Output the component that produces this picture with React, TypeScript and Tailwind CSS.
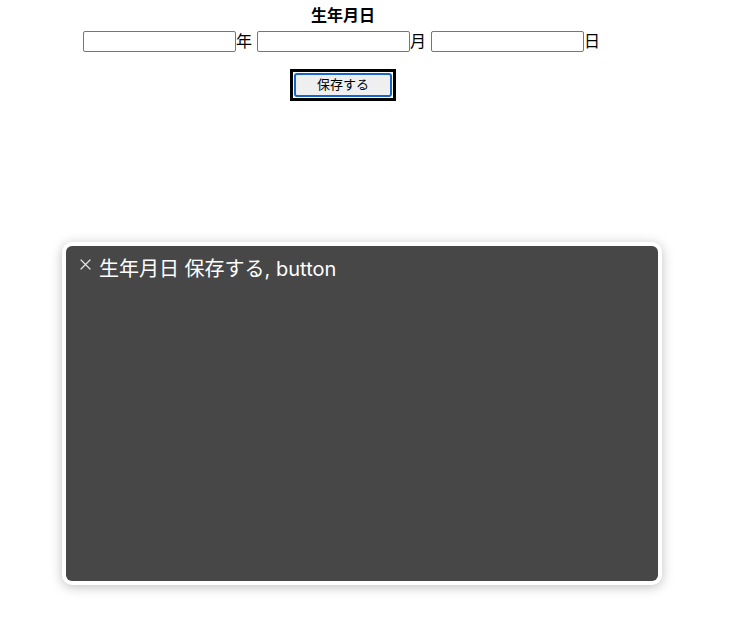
import React from "react";

const jp = "font-['Liberation_Sans','Noto_Sans_CJK_JP',sans-serif]";

export default function App() {
    return (
        <div className={`relative w-[744px] h-[629px] bg-white text-black ${jp}`}>
            <div className="w-[686px] pt-[6px]">
                <div className="text-center text-[16px] leading-[20px] font-bold">生年月日</div>
                <div className="flex items-center pl-[83px] mt-[5px] text-[16px] leading-[21px]">
                    <input className="w-[153px] h-[21px] border border-[#767676] rounded-[2px] bg-white px-[2px] text-[13px]" aria-label="年" />
                    <span className="w-[21px]">年</span>
                    <input className="w-[153px] h-[21px] border border-[#767676] rounded-[2px] bg-white px-[2px] text-[13px]" aria-label="月" />
                    <span className="w-[21px]">月</span>
                    <input className="w-[153px] h-[21px] border border-[#767676] rounded-[2px] bg-white px-[2px] text-[13px]" aria-label="日" />
                    <span>日</span>
                </div>
                <div className="flex justify-center mt-[17px]">
                    <span className="border-[3px] border-black p-px">
                        <button
                            type="button"
                            className="block w-[98px] h-[24px] border-2 border-[#1a62cc] rounded-[3px] bg-[#efefef] text-[13px] leading-[20px]"
                        >
                            保存する
                        </button>
                    </span>
                </div>
            </div>

            {/* caption panel overlay */}
            <div className="absolute left-[62px] top-[242px] w-[600px] h-[343px] rounded-[10px] bg-white p-[4px] shadow-[0_2px_12px_rgba(0,0,0,0.25)]">
                <div className="h-full rounded-[6px] bg-[#474747] flex items-start pt-[10px] pl-[14px]">
                    <svg width="11" height="11" viewBox="0 0 11 11" className="mt-[3px] mr-[8px] shrink-0">
                        <path d="M1 1L10 10M10 1L1 10" stroke="#e6e6e6" strokeWidth="1.2" strokeLinecap="round" />
                    </svg>
                    <span className="text-white text-[20px] leading-[26px] font-['Inter','Noto_Sans_CJK_JP',sans-serif]">
                        生年月日 保存する, button
                    </span>
                </div>
            </div>
        </div>
    );
}
